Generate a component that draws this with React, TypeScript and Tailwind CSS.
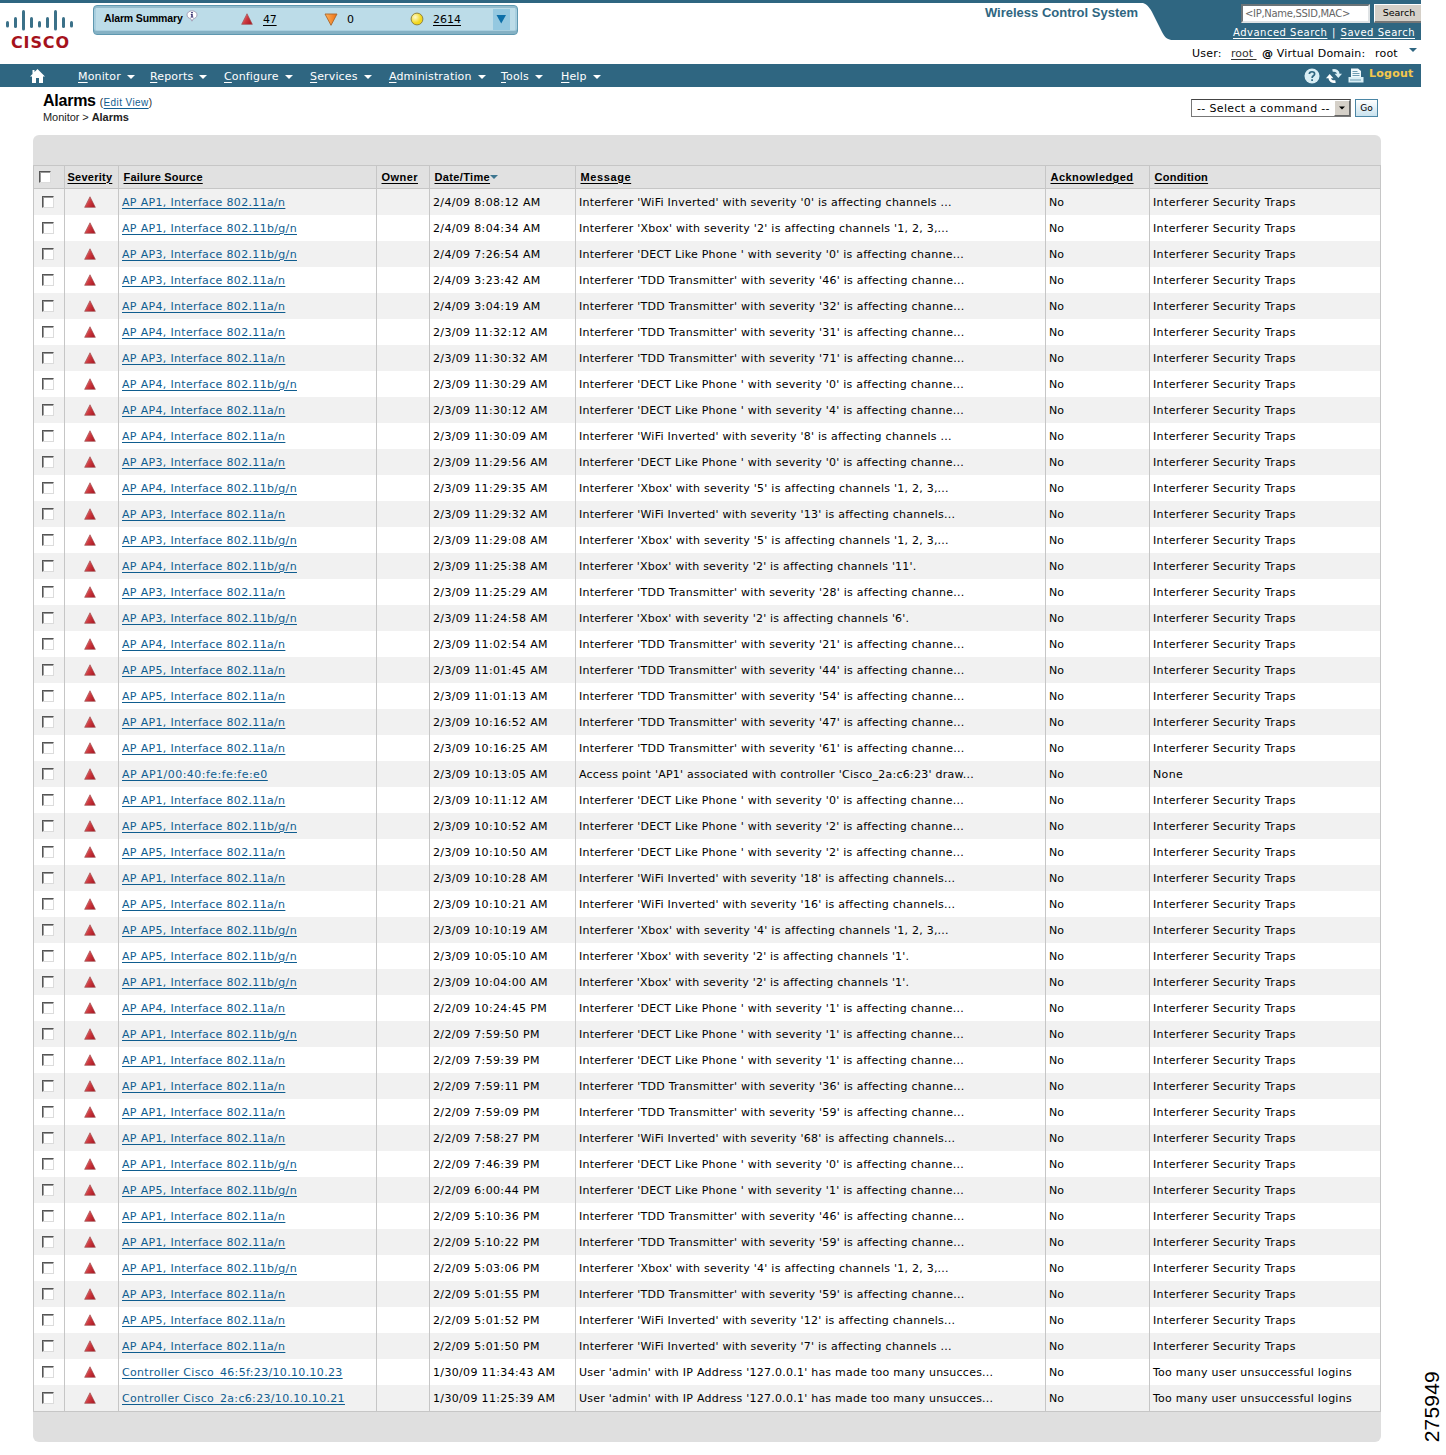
import type { ReactNode } from "react";
import { clsx } from "clsx";

type Alarm = [source: string, date: string, message: string, condition?: string];

const A1 = "AP AP1, Interface 802.11a/n";
const A3 = "AP AP3, Interface 802.11a/n";
const A4 = "AP AP4, Interface 802.11a/n";
const A5 = "AP AP5, Interface 802.11a/n";
const BG1 = "AP AP1, Interface 802.11b/g/n";
const BG3 = "AP AP3, Interface 802.11b/g/n";
const BG4 = "AP AP4, Interface 802.11b/g/n";
const BG5 = "AP AP5, Interface 802.11b/g/n";

const wifi = (n: number) =>
    `Interferer 'WiFi Inverted' with severity '${n}' is affecting channels${n < 10 ? " ..." : "..."}`;
const dect = (n: number) => `Interferer 'DECT Like Phone ' with severity '${n}' is affecting channe...`;
const tdd = (n: number) => `Interferer 'TDD Transmitter' with severity '${n}' is affecting channe...`;
const xbox = (n: number, channels: string) =>
    `Interferer 'Xbox' with severity '${n}' is affecting channels '${channels}`;

const LOGIN_MESSAGE = "User 'admin' with IP Address '127.0.0.1' has made too many unsucces...";
const LOGIN_CONDITION = "Too many user unsuccessful logins";

const ALARMS: Alarm[] = [
    [A1, "2/4/09 8:08:12 AM", wifi(0)],
    [BG1, "2/4/09 8:04:34 AM", xbox(2, "1, 2, 3,...")],
    [BG3, "2/4/09 7:26:54 AM", dect(0)],
    [A3, "2/4/09 3:23:42 AM", tdd(46)],
    [A4, "2/4/09 3:04:19 AM", tdd(32)],
    [A4, "2/3/09 11:32:12 AM", tdd(31)],
    [A3, "2/3/09 11:30:32 AM", tdd(71)],
    [BG4, "2/3/09 11:30:29 AM", dect(0)],
    [A4, "2/3/09 11:30:12 AM", dect(4)],
    [A4, "2/3/09 11:30:09 AM", wifi(8)],
    [A3, "2/3/09 11:29:56 AM", dect(0)],
    [BG4, "2/3/09 11:29:35 AM", xbox(5, "1, 2, 3,...")],
    [A3, "2/3/09 11:29:32 AM", wifi(13)],
    [BG3, "2/3/09 11:29:08 AM", xbox(5, "1, 2, 3,...")],
    [BG4, "2/3/09 11:25:38 AM", xbox(2, "11'.")],
    [A3, "2/3/09 11:25:29 AM", tdd(28)],
    [BG3, "2/3/09 11:24:58 AM", xbox(2, "6'.")],
    [A4, "2/3/09 11:02:54 AM", tdd(21)],
    [A5, "2/3/09 11:01:45 AM", tdd(44)],
    [A5, "2/3/09 11:01:13 AM", tdd(54)],
    [A1, "2/3/09 10:16:52 AM", tdd(47)],
    [A1, "2/3/09 10:16:25 AM", tdd(61)],
    [
        "AP AP1/00:40:fe:fe:fe:e0",
        "2/3/09 10:13:05 AM",
        "Access point 'AP1' associated with controller 'Cisco_2a:c6:23' draw...",
        "None",
    ],
    [A1, "2/3/09 10:11:12 AM", dect(0)],
    [BG5, "2/3/09 10:10:52 AM", dect(2)],
    [A5, "2/3/09 10:10:50 AM", dect(2)],
    [A1, "2/3/09 10:10:28 AM", wifi(18)],
    [A5, "2/3/09 10:10:21 AM", wifi(16)],
    [BG5, "2/3/09 10:10:19 AM", xbox(4, "1, 2, 3,...")],
    [BG5, "2/3/09 10:05:10 AM", xbox(2, "1'.")],
    [BG1, "2/3/09 10:04:00 AM", xbox(2, "1'.")],
    [A4, "2/2/09 10:24:45 PM", dect(1)],
    [BG1, "2/2/09 7:59:50 PM", dect(1)],
    [A1, "2/2/09 7:59:39 PM", dect(1)],
    [A1, "2/2/09 7:59:11 PM", tdd(36)],
    [A1, "2/2/09 7:59:09 PM", tdd(59)],
    [A1, "2/2/09 7:58:27 PM", wifi(68)],
    [BG1, "2/2/09 7:46:39 PM", dect(0)],
    [BG5, "2/2/09 6:00:44 PM", dect(1)],
    [A1, "2/2/09 5:10:36 PM", tdd(46)],
    [A1, "2/2/09 5:10:22 PM", tdd(59)],
    [BG1, "2/2/09 5:03:06 PM", xbox(4, "1, 2, 3,...")],
    [A3, "2/2/09 5:01:55 PM", tdd(59)],
    [A5, "2/2/09 5:01:52 PM", wifi(12)],
    [A4, "2/2/09 5:01:50 PM", wifi(7)],
    ["Controller Cisco_46:5f:23/10.10.10.23", "1/30/09 11:34:43 AM", LOGIN_MESSAGE, LOGIN_CONDITION],
    ["Controller Cisco_2a:c6:23/10.10.10.21", "1/30/09 11:25:39 AM", LOGIN_MESSAGE, LOGIN_CONDITION],
];

const MENU = [
    { label: "Monitor", width: "w-[72px]" },
    { label: "Reports", width: "w-[74px]" },
    { label: "Configure", width: "w-[86px]" },
    { label: "Services", width: "w-[79px]" },
    { label: "Administration", width: "w-[112px]" },
    { label: "Tools", width: "w-[60px]" },
    { label: "Help", width: "w-[60px]" },
];

const LOGO_BARS = [
    [7.5, 22.5, 26],
    [15.5, 18.5, 26.5],
    [23.5, 11.5, 29],
    [31.5, 18.5, 26.5],
    [39.5, 22.5, 26],
    [47.5, 18.5, 26.5],
    [55.5, 11.5, 29],
    [63.5, 18.5, 26.5],
    [71.5, 22.5, 26],
];

const GRID = "grid grid-cols-[31px_54px_258px_53px_146px_470px_104px_231px]";

function Logo() {
    return (
        <svg width="80" height="61" viewBox="0 3 80 61" className="shrink-0">
            <g stroke="#3b7189" strokeWidth="3" strokeLinecap="round">
                {LOGO_BARS.map(([x, y1, y2]) => (
                    <line key={x} x1={x} x2={x} y1={y1} y2={y2} />
                ))}
            </g>
            <text
                x="11"
                y="48"
                textLength="58"
                lengthAdjust="spacing"
                fill="#a5121c"
                className="font-['DejaVu_Sans'] text-[16px] font-bold"
            >
                CISCO
            </text>
        </svg>
    );
}

function Critical() {
    return (
        <svg width="12" height="12" viewBox="0 0 13 13" className="shrink-0">
            <defs>
                <linearGradient id="critical" x1="0" y1="0" x2="1" y2="0.6">
                    <stop offset="0.2" stopColor="#e58a8a" />
                    <stop offset="0.55" stopColor="#cf3a40" />
                    <stop offset="1" stopColor="#b01c26" />
                </linearGradient>
            </defs>
            <path d="M6.5 .8 12.3 12.3H.7Z" fill="url(#critical)" stroke="#9c4a4c" strokeWidth=".7" />
        </svg>
    );
}

function Caret({ className }: { className?: string }) {
    return (
        <svg width="8" height="4" viewBox="0 0 8 4" className={clsx("shrink-0", className)}>
            <path d="M0 0h8L4 4Z" fill="currentColor" />
        </svg>
    );
}

function Checkbox() {
    return (
        <span className="block size-3 border border-t-[#555] border-l-[#555] border-r-[#dcdcdc] border-b-[#dcdcdc] bg-white shadow-[inset_1px_1px_0_#999]" />
    );
}

function AlarmSummary() {
    return (
        <div className="mt-[2px] ml-[13px] flex h-[30px] w-[425px] shrink-0 items-center rounded-[4px] border border-[#5f98b0] bg-[#a9cfdf] p-[2px] pb-[4px] shadow-[inset_0_-3px_0_#85b1c4,inset_0_2px_0_#93bccd]">
            <div className="flex h-[22px] w-full items-center bg-[#bcdce8] pl-2 text-[11px] text-black">
                <span className="w-[82px] shrink-0 font-['Liberation_Sans'] text-[10.5px] font-bold tracking-[-0.15px] whitespace-nowrap">
                    Alarm Summary
                </span>
                <svg width="12" height="12" viewBox="0 0 12 12" className="-mt-1.5 shrink-0">
                    <path d="M6 .8c3 0 5 1.8 5 4s-1.600 3.600-3.600 3.900L6 11.200 4.700 8.700C2.500 8.300 1 6.800 1 4.800s2-4 5-4Z" fill="#fff" stroke="#a3a0b8" />
                    <path d="M5.200 2h1.600v1.300H5.200ZM4.700 4h2v2.800h.7v.8H4.600v-.8h.7v-2h-.6Z" fill="#2c2468" />
                </svg>
                <span className="ml-[43px] flex w-[22px] shrink-0 items-center"><Critical /></span>
                <a className="w-[61px] shrink-0 pt-[3px] tracking-[-0.2px] underline underline-offset-2">47</a>
                <svg width="14" height="13" viewBox="0 0 14 13" className="mr-[9px] shrink-0">
                    <defs>
                        <linearGradient id="major">
                            <stop stopColor="#ffb35c" />
                            <stop offset="1" stopColor="#ec6f12" />
                        </linearGradient>
                    </defs>
                    <path d="M1 1h12L7 12.300Z" fill="url(#major)" stroke="#a8672c" strokeWidth=".9" />
                </svg>
                <span className="w-[63px] shrink-0 pt-[3px]">0</span>
                <svg width="14" height="14" viewBox="0 0 14 14" className="mr-[9px] shrink-0">
                    <defs>
                        <radialGradient id="minor" cx=".35" cy=".35">
                            <stop stopColor="#fffbd0" />
                            <stop offset="1" stopColor="#f2d71c" />
                        </radialGradient>
                    </defs>
                    <circle cx="7" cy="7" r="5.900" fill="url(#minor)" stroke="#8f8444" />
                </svg>
                <a className="w-[60px] shrink-0 pt-[3px] underline underline-offset-2">2614</a>
                <span className="flex h-[21px] w-[17px] shrink-0 items-center justify-center bg-[#94c8e0]">
                    <svg width="11" height="10" viewBox="0 0 11 10">
                        <path d="M.5 1h9.500L5.200 9.500Z" fill="#0c6fa8" />
                    </svg>
                </span>
            </div>
        </div>
    );
}

function SearchPanel() {
    return (
        <div className="flex w-[278px] shrink-0 flex-col">
            <div className="flex h-[37px]">
                <svg width="30" height="37" viewBox="0 0 30 37" className="shrink-0">
                    <path d="M0 0h30v37c-5 0-8-2-11-8L9 9C6 3.500 3 1 0 0Z" fill="#2f6681" />
                </svg>
                <div className="flex-1 bg-[#2f6681] text-[11px] text-white">
                    <div className="flex pt-px pl-[68px]">
                        <div className="mr-[4px] h-[19px] w-[129px] border-2 border-t-[#6b7478] border-l-[#6b7478] border-r-[#dfe3e5] border-b-[#dfe3e5] bg-white pl-[2px] text-[10px] leading-[15px] tracking-[-0.3px] whitespace-nowrap text-[#666]">
                            &lt;IP,Name,SSID,MAC&gt;
                        </div>
                        <button className="h-[19px] w-[47px] border-t border-b-2 border-l border-t-white border-l-white border-b-[#777] bg-[#d5d0c8] pl-[2px] text-[9.5px] leading-4 text-black">
                            Search
                        </button>
                    </div>
                    <div className="flex justify-between pt-[3px] pr-[6px] pl-[60px] text-[10px] leading-[13px] tracking-[0.5px] whitespace-nowrap">
                        <a className="underline underline-offset-2">Advanced Search</a>
                        <span>|</span>
                        <a className="underline underline-offset-2">Saved Search</a>
                    </div>
                </div>
            </div>
            <div className="flex h-6 items-center pt-[4px] pl-[49px] text-[11px] whitespace-nowrap text-black">
                <span className="w-[39px] tracking-[0.2px]">User:</span>
                <a className="w-[26px] whitespace-pre text-[#333] underline underline-offset-2">root </a>
                <span className="ml-[5px] w-[113px] tracking-[0.18px]"><b>@</b> Virtual Domain:</span>
                <span className="w-[34px] tracking-[0.2px]">root</span>
                <Caret className="mb-2 text-[#2f6681]" />
            </div>
        </div>
    );
}

function NavBar() {
    return (
        <nav className="flex h-[23px] items-center bg-[#2f6681] text-[11px] text-white">
            <svg width="15" height="14" viewBox="0 0 15 14" className="mr-[33px] ml-[30px]">
                <path d="M7.500 0 15 7.500h-2V14H9V9H6v5H2V7.500H0L2.500 5V1h2v2Z" fill="#fff" />
            </svg>
            {MENU.map(({ label, width }) => (
                <div key={label} className={clsx("flex items-center gap-[6px] whitespace-nowrap pt-[3px] tracking-[0.15px]", width)}>
                    <span>
                        <span className="underline underline-offset-2">{label[0]}</span>
                        {label.slice(1)}
                    </span>
                    <Caret className="mb-px" />
                </div>
            ))}
            <div className="mr-[7px] mb-[3px] ml-auto flex items-center">
                <svg width="16" height="16" viewBox="0 0 17 17" className="mt-[3px]">
                    <circle cx="8.500" cy="8.500" r="8" fill="#d9eef5" />
                    <path d="M5.700 6.500c0-3.400 5.600-3.300 5.600-.2 0 2-2.700 1.900-2.700 4.200M8.600 12v1.800" fill="none" stroke="#2f6681" strokeWidth="1.800" />
                </svg>
                <svg width="16" height="16" viewBox="0 0 16 16" className="mt-[3px] ml-[6px]">
                    <path d="M6.500 2.500C10 1.800 12.300 3.500 12.300 6.500" fill="none" stroke="#d9eef5" strokeWidth="2.600" />
                    <path d="M8.600 5.800H16L12.300 10Z" fill="#d9eef5" />
                    <path d="M9.500 13.500C6 14.200 3.700 12.500 3.700 9.500" fill="none" stroke="#fff" strokeWidth="2.600" />
                    <path d="M0 10.200h7.400L3.700 6Z" fill="#fff" />
                </svg>
                <svg width="16" height="16" viewBox="0 0 16 16" className="mt-[3px] ml-[6px]">
                    <path d="M3 .5h7L13 3v6H3Z" fill="#eff8fb" />
                    <path d="M.5 9H15.500v5.500H.5Z" fill="#d9eef5" />
                    <path d="M4.500 3.500h5M4.500 5.500h7M4.500 7.500h7M2 12h11" stroke="#6e9db3" />
                </svg>
                <a className="ml-[5px] w-[45px] text-[11px] font-bold tracking-[0.25px] text-[#f5c84c]">Logout</a>
            </div>
        </nav>
    );
}

function HeaderCell({ children, className }: { children?: ReactNode; className?: string }) {
    return (
        <div
            className={clsx(
                "flex items-center border-l border-[#c6c6c6] font-['Liberation_Sans'] text-[11px] font-bold whitespace-nowrap",
                className ?? "pl-[4.5px] tracking-[0.45px]",
            )}
        >
            {children}
        </div>
    );
}

function Cell({ children, className }: { children?: ReactNode; className?: string }) {
    return (
        <div className={clsx("flex items-center border-l border-[#c6c6c6] whitespace-nowrap", className)}>
            {children}
        </div>
    );
}

function AlarmTable() {
    return (
        <section className="ml-[33px] w-[1348px] overflow-hidden rounded-[6px] bg-[#dfdfdf] text-[11px] text-black">
            <div className="h-[30px]" />
            <div className={clsx(GRID, "h-6 border-y border-r border-[#c6c6c6] bg-[#e1e1e1] [&_u]:underline-offset-2")}>
                <HeaderCell className="pl-[5px]"><Checkbox /></HeaderCell>
                <HeaderCell className="pl-[2.500px] tracking-[0.25px]"><u>Severity</u></HeaderCell>
                <HeaderCell className="pl-[4.5px] tracking-[0.2px]"><u>Failure Source</u></HeaderCell>
                <HeaderCell><u>Owner</u></HeaderCell>
                <HeaderCell className="pl-[4.5px] tracking-[0.35px]">
                    <u>Date/Time</u>
                    <Caret className="text-[#3d7690]" />
                </HeaderCell>
                <HeaderCell className="pl-[4.5px] tracking-[0.6px]"><u>Message</u></HeaderCell>
                <HeaderCell><u>Acknowledged</u></HeaderCell>
                <HeaderCell className="pl-[4.5px] tracking-[0.25px]"><u>Condition</u></HeaderCell>
            </div>
            {ALARMS.map(([source, date, message, condition = "Interferer Security Traps"]) => (
                <div key={date} className={clsx(GRID, "h-[26px] border-r border-[#c6c6c6] odd:bg-[#f1f1f1] even:bg-white")}>
                    <Cell className="pl-[8px]"><Checkbox /></Cell>
                    <Cell className="pl-[19px]"><Critical /></Cell>
                    <Cell className={clsx("pt-[2px] pl-[3px]", source.includes("fe:e0") ? "tracking-[0.46px]" : "tracking-[0.33px]")}>
                        <a className="text-[#0f5d8f] underline underline-offset-2">{source}</a>
                    </Cell>
                    <Cell />
                    <Cell className="pt-[2px] pl-[3px] tracking-[0.34px]">{date}</Cell>
                    <Cell className={clsx("pt-[2px] pl-[3px]", message.endsWith("'.") ? "tracking-[0.21px]" : "tracking-[0.245px]")}>
                        {message}
                    </Cell>
                    <Cell className="pt-[2px] pl-[3px]">No</Cell>
                    <Cell className={clsx("pt-[2px] pl-[3px]", condition === LOGIN_CONDITION ? "tracking-[0.25px]" : "tracking-[0.38px]")}>
                        {condition}
                    </Cell>
                </div>
            ))}
            <div className="h-[31px] border-t border-[#c6c6c6]" />
        </section>
    );
}

export default function App() {
    return (
        <div className="flex h-[1455px] w-[1446px] overflow-hidden bg-white font-['DejaVu_Sans',sans-serif]">
            <main className="w-[1421px] shrink-0">
                <header className="flex h-16 border-t-[3px] border-[#2f6681]">
                    <Logo />
                    <AlarmSummary />
                    <div className="flex-1 pt-[2px] pr-[5px] text-right font-['Liberation_Sans'] text-[13px] leading-[16px] font-bold text-[#2f6681]">
                        Wireless Control System
                    </div>
                    <SearchPanel />
                </header>
                <NavBar />
                <div className="flex h-12 pl-[43px]">
                    <div className="pt-[4px] font-['Liberation_Sans'] text-[11px] text-[#222]">
                        <h1 className="leading-[19px]">
                            <span className="text-[16px] font-bold tracking-[-0.25px] text-black">Alarms</span>{" "}
                            <span className="ml-px text-[10px] tracking-[0.4px]">
                                (<a className="text-[#0f5d8f] underline underline-offset-2">Edit View</a>)
                            </span>
                        </h1>
                        <p className="-mt-[2px] leading-[14px] tracking-[-0.05px]">Monitor &gt; <b>Alarms</b></p>
                    </div>
                    <div className="mr-[43px] ml-auto flex pt-[12px] text-[11px] text-black">
                        <div className="flex h-[18px] w-[160px] items-center justify-between border border-[#777] border-t-[#444] bg-white pl-[5px] whitespace-nowrap">
                            <span className="pt-[3px] tracking-[0.34px]">-- Select a command --</span>
                            <span className="flex h-4 w-4 items-center justify-center border border-r-[#666] border-b-[#666] border-t-white border-l-white bg-[#d5d0c8]">
                                <Caret className="w-[6px]" />
                            </span>
                        </div>
                        <button className="ml-[4px] h-[18px] w-[23px] border border-[#4b86a5] bg-linear-to-b from-white to-[#c9e2ee] text-[9px] leading-4">
                            Go
                        </button>
                    </div>
                </div>
                <AlarmTable />
            </main>
            <aside className="flex w-[25px] items-end pb-[13px]">
                <span className="-ml-px rotate-180 font-['Liberation_Sans'] text-[21px] leading-[24px] tracking-[0.2px] text-black [writing-mode:vertical-rl]">
                    275949
                </span>
            </aside>
        </div>
    );
}
